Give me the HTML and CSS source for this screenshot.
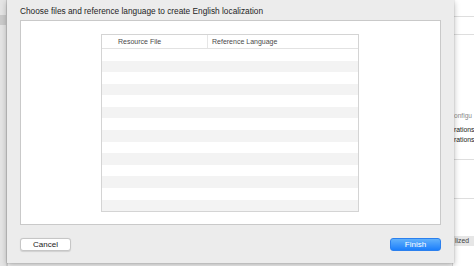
FILE: index.html
```html
<!DOCTYPE html>
<html>
<head>
<meta charset="utf-8">
<link rel="stylesheet" href="styles.css">
</head>
<body>
<div class="screen">
  <div class="window">
    <div class="sidebar"><div class="sidebar-chip"></div></div>
    <div class="center"></div>
    <div class="inspector">
      <div class="ins-line first"></div>
      <div class="ins-line second"></div>
      <div class="ins-head">onfigu</div>
      <div class="ins-row">rations</div>
      <div class="ins-row">rations</div>
      <div class="ins-line third"></div>
      <div class="ins-line fourth"></div>
      <div class="ins-loc">lized</div>
    </div>
  </div>

  <div class="sheet">
    <div class="sheet-title">Choose files and reference language to create English localization</div>
    <div class="sheet-box">
      <div class="table">
        <div class="thead">
          <div class="th th-file">Resource File</div>
          <div class="th th-lang">Reference Language</div>
        </div>
        <div class="tbody">
          <div class="tr"></div><div class="tr"></div><div class="tr"></div><div class="tr"></div>
          <div class="tr"></div><div class="tr"></div><div class="tr"></div><div class="tr"></div>
          <div class="tr"></div><div class="tr"></div><div class="tr"></div><div class="tr"></div>
          <div class="tr"></div><div class="tr"></div>
        </div>
      </div>
    </div>
    <div class="sheet-footer">
      <button class="btn btn-cancel">Cancel</button>
      <button class="btn btn-finish">Finish</button>
    </div>
  </div>
</div>
</body>
</html>
```

FILE: styles.css
```css
* { box-sizing: border-box; }
html, body { margin: 0; padding: 0; }
body {
  width: 474px;
  height: 266px;
  overflow: hidden;
  font-family: "Liberation Sans", Arial, sans-serif;
  background: #f2f2f2;
}
.screen {
  position: relative;
  width: 474px;
  height: 266px;
  overflow: hidden;
}
.window {
  display: flex;
  width: 474px;
  height: 266px;
}
.sidebar {
  width: 8px;
  background: #e4e4e4;
  border-right: 2px solid #d2d2d2;
  padding-top: 15px;
}
.sidebar-chip {
  height: 10px;
  background: #cacaca;
}
.center {
  flex: 1;
  background: #f4f4f4;
  border-right: 1px solid #d8d8d8;
}
.inspector {
  width: 21px;
  background: #ffffff;
  overflow: hidden;
  white-space: nowrap;
  display: flex;
  flex-direction: column;
}
.ins-line { width: 100%; height: 1px; background: #dedede; }
.ins-line.first { margin-top: 16px; }
.ins-line.second { margin-top: 17px; }
.ins-head {
  margin-top: 76px;
  padding-left: 1px;
  font-size: 6.6px;
  color: #8a8a8a;
  line-height: 9px;
}
.ins-row {
  padding-left: 1px;
  font-size: 6.8px;
  color: #222;
  line-height: 10px;
}
.ins-head + .ins-row { margin-top: 5px; }
.ins-line.third { margin-top: 14px; }
.ins-line.fourth { margin-top: 38px; }
.ins-loc {
  margin-top: 37px;
  width: 100%;
  height: 10px;
  background: #e6e6e6;
  font-size: 6.8px;
  line-height: 10px;
  color: #444;
  padding-left: 2px;
}

.sheet {
  position: absolute;
  left: 7px;
  top: 0;
  width: 447px;
  height: 263px;
  background: #ececec;
  box-shadow: 0 2px 6px rgba(0,0,0,0.28), 0 0 1px rgba(0,0,0,0.25);
  display: flex;
  flex-direction: column;
  padding: 0 13px;
}
.sheet-title {
  height: 20px;
  padding-top: 3px;
  font-size: 8.3px;
  line-height: 17px;
  color: #1e1e1e;
  white-space: nowrap;
}
.sheet-box {
  height: 205px;
  background: #ffffff;
  border: 1px solid #c9c9c9;
  padding: 13px 81px 12px 80px;
}
.table {
  height: 178px;
  border: 1px solid #d4d4d4;
  display: flex;
  flex-direction: column;
  background: #fff;
}
.thead {
  height: 14px;
  display: flex;
  border-bottom: 1px solid #e2e2e2;
  font-size: 7px;
  color: #4a4a4a;
  line-height: 13px;
}
.th { white-space: nowrap; }
.th-file {
  width: 106px;
  padding-left: 16px;
  border-right: 1px solid #e6e6e6;
}
.th-lang { padding-left: 4px; }
.tbody {
  flex: 1;
  display: flex;
  flex-direction: column;
}
.tr { flex: 1; background: #ffffff; }
.tr:nth-child(even) { background: #f3f3f3; }

.sheet-footer {
  flex: 1;
  display: flex;
  justify-content: space-between;
  align-items: flex-start;
  padding-top: 13px;
}
.btn {
  font-family: "Liberation Sans", Arial, sans-serif;
  font-size: 8px;
  height: 13px;
  line-height: 12px;
  padding: 0;
  border-radius: 3px;
  cursor: default;
}
.btn-cancel {
  width: 51px;
  background: #ffffff;
  color: #222;
  border: 1px solid #c6c6c6;
  box-shadow: 0 0.5px 1px rgba(0,0,0,0.12);
}
.btn-finish {
  width: 51px;
  background: linear-gradient(#62b1fb, #1c7ffb);
  color: #ffffff;
  border: 1px solid #2b80ee;
}
```
